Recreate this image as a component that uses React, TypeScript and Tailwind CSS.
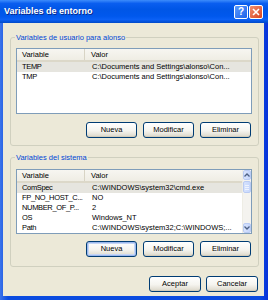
import React from "react";

type Row = [string, string];

function Btn({ label, focus, w = "w-[51px]" }: { label: string; focus?: boolean; w?: string }) {
  return (
    <button
      className={`${w} h-[16px] rounded-[3px] border border-[#003c74] bg-[linear-gradient(to_bottom,#ffffff,#f5f4ef_55%,#e4e1d6_85%,#d8d3c4)] text-[7.5px] leading-none text-black ${
        focus ? "shadow-[inset_0_0_0_1px_#9bb8ee,inset_0_0_0_2px_#c6d6f5]" : "shadow-[inset_0_-1px_0_#d2ccbb]"
      }`}
    >
      {label}
    </button>
  );
}

function Chevron({ up }: { up?: boolean }) {
  return (
    <svg width="6" height="4" viewBox="0 0 6 4">
      <path
        d={up ? "M0.5 3.5 L3 1 L5.5 3.5" : "M0.5 0.5 L3 3 L5.5 0.5"}
        fill="none"
        stroke="#4d6185"
        strokeWidth="1.3"
      />
    </svg>
  );
}

function ScrollBar() {
  return (
    <div className="w-[9px] flex flex-col bg-[#f4f3ef] border-l border-[#eeede5]">
      <div className="h-[10px] flex items-center justify-center rounded-[2px] border border-[#b9cbf3] bg-[linear-gradient(to_right,#d9e4fd,#c3d4fb)]">
        <Chevron up />
      </div>
      <div className="h-[12px] mt-[1px] flex flex-col items-center justify-center gap-[1px] rounded-[2px] border border-[#b9cbf3] bg-[linear-gradient(to_right,#d6e2fd,#c6d7fc)]">
        <div className="w-[4px] h-[1px] bg-[#eef3fe]" />
        <div className="w-[4px] h-[1px] bg-[#eef3fe]" />
        <div className="w-[4px] h-[1px] bg-[#eef3fe]" />
      </div>
      <div className="flex-1" />
      <div className="h-[10px] flex items-center justify-center rounded-[2px] border border-[#b9cbf3] bg-[linear-gradient(to_right,#d9e4fd,#c3d4fb)]">
        <Chevron />
      </div>
    </div>
  );
}

function ListView({ rows, scroll, h }: { rows: Row[]; scroll?: boolean; h: string }) {
  return (
    <div className={`${h} border border-[#7f9db9] bg-white flex overflow-hidden`}>
      <div className="flex-1 min-w-0 flex flex-col">
        <div className="flex h-[13px] shrink-0 bg-[linear-gradient(to_bottom,#f7f6f1,#efede4)] border-b-2 border-[#dcd8c9] text-[7.5px] text-black">
          <div className="w-[68px] pl-[5px] flex items-center border-r border-[#d8d4c5]">Variable</div>
          <div className="flex-1 pl-[6px] flex items-center">Valor</div>
        </div>
        {rows.map((r, i) => (
          <div
            key={i}
            className={`flex h-[10px] shrink-0 items-center text-[7.5px] leading-none text-black whitespace-nowrap ${
              i === 0 ? "bg-[#e6e5df]" : ""
            }`}
          >
            <div className="w-[68px] shrink-0 pl-[5px] tracking-[-0.35px]">{r[0]}</div>
            <div className="flex-1 pl-[7px] overflow-hidden">{r[1]}</div>
          </div>
        ))}
      </div>
      {scroll ? <ScrollBar /> : null}
    </div>
  );
}

function Group({
  title,
  children,
  className,
}: {
  title: string;
  children: React.ReactNode;
  className?: string;
}) {
  return (
    <fieldset className={`border border-[#d0d0bf] rounded-[3px] pl-[5px] pr-[6px] ${className ?? ""}`}>
      <legend className="px-[1px] -ml-[1px] text-[7.5px] leading-[9px] text-[#0046d5]">{title}</legend>
      {children}
    </fieldset>
  );
}

export default function App() {
  const userRows: Row[] = [
    ["TEMP", "C:\\Documents and Settings\\alonso\\Con..."],
    ["TMP", "C:\\Documents and Settings\\alonso\\Con..."],
  ];
  const sysRows: Row[] = [
    ["ComSpec", "C:\\WINDOWS\\system32\\cmd.exe"],
    ["FP_NO_HOST_C...", "NO"],
    ["NUMBER_OF_P...", "2"],
    ["OS", "Windows_NT"],
    ["Path", "C:\\WINDOWS\\system32;C:\\WINDOWS;..."],
  ];

  return (
    <div className="w-[268px] h-[300px] flex flex-col bg-[linear-gradient(to_right,#3c74ea,#0a4be0_3%,#0a4be0_97%,#0831d9)] font-['Liberation_Sans',Arial,sans-serif] overflow-hidden">
      {/* Title bar */}
      <div className="h-[23px] shrink-0 flex items-center justify-between pl-[4px] pr-[5px] bg-[linear-gradient(to_bottom,#3d8cfb,#0a5eef_15%,#0056e6_40%,#0058ed_70%,#0a60f5_85%,#0049c8)]">
        <span className="text-[9px] font-bold text-white [text-shadow:1px_1px_0_#0a2a8a]">Variables de entorno</span>
        <div className="flex gap-[1px]">
          <div className="w-[14px] h-[14px] rounded-[2px] border border-white bg-[linear-gradient(135deg,#5c9bff,#1d62e8)] flex items-center justify-center text-[10px] font-bold leading-none text-white">
            ?
          </div>
          <div className="w-[14px] h-[14px] rounded-[2px] border border-white bg-[linear-gradient(135deg,#f19070,#d8431f)] flex items-center justify-center">
            <svg width="8" height="8" viewBox="0 0 8 8">
              <path d="M1 1 L7 7 M7 1 L1 7" stroke="white" strokeWidth="1.6" />
            </svg>
          </div>
        </div>
      </div>

      {/* Body */}
      <div className="flex-1 ml-[3px] mr-[4px] mb-[4px] bg-[#ece9d8] pt-[10px] pl-[7px] pr-[5px] flex flex-col">
        <Group title="Variables de usuario para alonso" className="pt-[6px] pb-[7px]">
          <ListView rows={userRows} h="h-[66px]" />
          <div className="mt-[8px] flex justify-end gap-[6px] pr-[1px]">
            <Btn label="Nueva" />
            <Btn label="Modificar" />
            <Btn label="Eliminar" />
          </div>
        </Group>

        <Group title="Variables del sistema" className="mt-[7px] pt-[7px] pb-[9px]">
          <ListView rows={sysRows} h="h-[65px]" scroll />
          <div className="mt-[7px] flex justify-end gap-[6px] pr-[1px]">
            <Btn label="Nueva" focus />
            <Btn label="Modificar" />
            <Btn label="Eliminar" />
          </div>
        </Group>

        <div className="mt-[9px] flex justify-end gap-[5px] pr-[1px]">
          <Btn label="Aceptar" w="w-[52px]" />
          <Btn label="Cancelar" w="w-[52px]" />
        </div>
      </div>
    </div>
  );
}
